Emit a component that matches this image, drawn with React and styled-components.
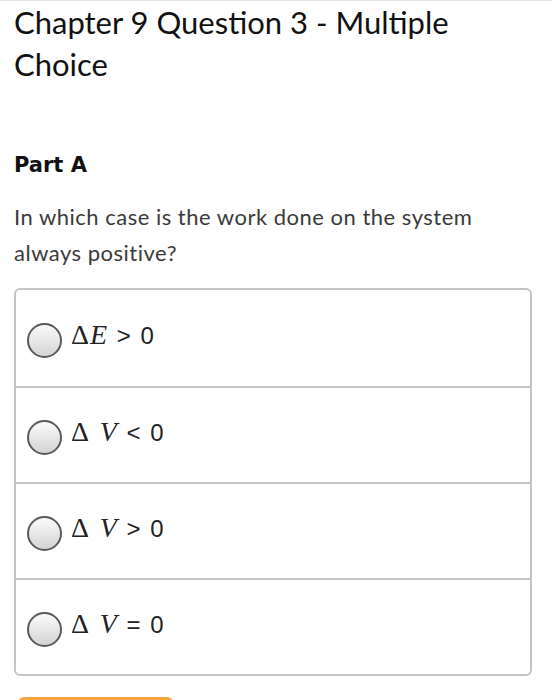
import styled, { createGlobalStyle } from "styled-components";

const GlobalStyle = createGlobalStyle`
    body {
        margin: 0;
        background: #ffffff;
        font-family: Lato, "Open Sans", sans-serif;
    }
`;

const Page = styled.div`
    width: 552px;
    height: 700px;
    overflow: hidden;
    border-top: 1px solid #e2e2e2;
    box-sizing: border-box;
    padding: 0 20px 0 14px;
`;

const Title = styled.h1`
    margin: 0;
    font-weight: 400;
    font-size: 31px;
    line-height: 42px;
    color: #111;
`;

const PartTitle = styled.h2`
    margin: 66px 0 0;
    font-family: "DejaVu Sans", sans-serif;
    font-weight: 700;
    font-size: 21px;
    line-height: 28px;
    color: #111;
`;

const Question = styled.p`
    margin: 20px 0 0;
    font-size: 22px;
    letter-spacing: 0.5px;
    line-height: 36px;
    color: #3a3a3a;
`;

const Choices = styled.div`
    margin-top: 17px;
    border: 2px solid #c4c4c4;
    border-radius: 6px;
    overflow: hidden;
`;

const Choice = styled.label`
    box-sizing: border-box;
    display: flex;
    align-items: center;
    gap: 9px;
    height: 96px;
    padding-left: 11px;
    border-top: ${(props) => (props.first ? "none" : "2px solid #c4c4c4")};
    cursor: pointer;
`;

const Radio = styled.span`
    box-sizing: border-box;
    width: 35px;
    height: 35px;
    border-radius: 50%;
    border: 2px solid #5a5a5a;
    background: linear-gradient(#fafafa, #d4d4d4);
    flex-shrink: 0;
    margin-top: 4px;
`;

const Formula = styled.span`
    font-family: "Liberation Sans", Arial, sans-serif;
    font-size: 24px;
    word-spacing: 3px;
    color: #222;
    white-space: pre;
    margin-top: -6px;
`;

const Delta = styled.span`
    font-family: "Liberation Serif", "DejaVu Serif", serif;
    font-size: 28px;
`;

const Var = styled.span`
    font-family: "Liberation Serif", "DejaVu Serif", serif;
    font-style: italic;
    font-size: 28px;
    margin-left: 1px;
`;

const SubmitButton = styled.button`
    display: block;
    margin: 21px 0 0 4px;
    width: 155px;
    height: 40px;
    border: none;
    border-radius: 6px;
    background: #f3a63f;
`;

const options = [
    { sep: "", v: "E", rest: " > 0" },
    { sep: " ", v: "V", rest: " < 0" },
    { sep: " ", v: "V", rest: " > 0" },
    { sep: " ", v: "V", rest: " = 0" },
];

export default function App() {
    return (
        <Page>
            <GlobalStyle />
            <Title>Chapter 9 Question 3 - Multiple Choice</Title>
            <PartTitle>Part A</PartTitle>
            <Question>In which case is the work done on the system always positive?</Question>
            <Choices>
                {options.map((o, i) => (
                    <Choice key={i} first={i === 0}>
                        <Radio />
                        <Formula>
                            <Delta>Δ</Delta>
                            {o.sep}
                            <Var>{o.v}</Var>
                            {o.rest}
                        </Formula>
                    </Choice>
                ))}
            </Choices>
            <SubmitButton />
        </Page>
    );
}
